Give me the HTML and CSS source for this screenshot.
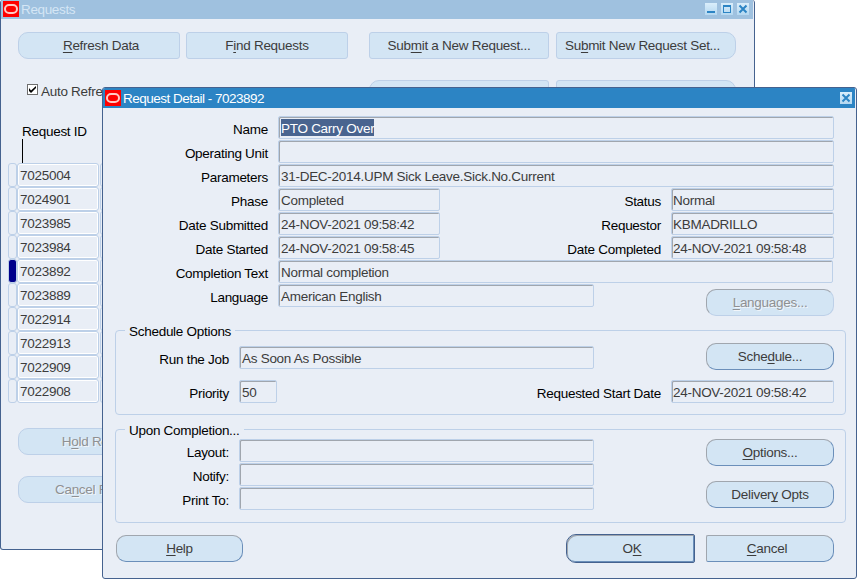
FILE: index.html
```html
<!DOCTYPE html>
<html lang="en">
<head>
  <meta charset="UTF-8">
  <title>Requests</title>
  <meta name="viewport" content="width=device-width, initial-scale=1.0">
  <link rel="stylesheet" href="styles.css">
</head>
<body>
  <div class="window requests">
    <div class="titlebar">
      <svg class="logo" width="16" height="16" viewBox="0 0 16 16"><rect width="16" height="16" fill="#fe0000"/><rect x="2" y="4" width="12" height="8" rx="4" fill="none" stroke="#ffc9c4" stroke-width="2"/></svg>
      <span class="title">Requests</span>
      <div class="controls">
        <svg width="12" height="12" viewBox="0 0 12 12"><path d="M2 8h8v2H2z" fill="#2c84c4"/></svg>
        <svg width="12" height="12" viewBox="0 0 12 12"><path d="M2 2h8v8H2zM3 4v5h6V4z" fill="#2c84c4" fill-rule="evenodd"/></svg>
        <svg width="12" height="12" viewBox="0 0 12 12"><path d="M2.5 2.5l7 7M9.5 2.5l-7 7" stroke="#2c84c4" stroke-width="2"/></svg>
      </div>
    </div>
    <div class="requests-body">
      <div class="toolbar">
        <button class="btn first"><u>R</u>efresh Data</button>
        <button class="btn">F<u>i</u>nd Requests</button>
        <button class="btn wide">Sub<u>m</u>it a New Request...</button>
        <button class="btn wide last">Su<u>b</u>mit New Request Set...</button>
      </div>
      <div class="options-row">
        <div class="check">
          <svg width="11" height="11" viewBox="0 0 11 11"><rect x=".5" y=".5" width="10" height="10" fill="#fff" stroke="#6e6e6e"/><path d="M2 4v3l2 2 5-5V2L4 6.500z" fill="#000"/></svg>
          <span>Auto Refresh (Y)</span>
        </div>
        <button class="btn wide first"></button>
        <button class="btn wide last"></button>
      </div>
      <div class="column-title">Request ID</div>
      <div class="caret"></div>
      <div class="records">
        <div class="record"><i></i><span>7025004</span><b></b></div>
        <div class="record"><i></i><span>7024901</span><b></b></div>
        <div class="record"><i></i><span>7023985</span><b></b></div>
        <div class="record"><i></i><span>7023984</span><b></b></div>
        <div class="record current"><i></i><span>7023892</span><b></b></div>
        <div class="record"><i></i><span>7023889</span><b></b></div>
        <div class="record"><i></i><span>7022914</span><b></b></div>
        <div class="record"><i></i><span>7022913</span><b></b></div>
        <div class="record"><i></i><span>7022909</span><b></b></div>
        <div class="record"><i></i><span>7022908</span><b></b></div>
      </div>
      <div class="side-buttons">
        <button class="btn first" disabled>H<u>o</u>ld Request</button>
        <button class="btn first" disabled>Ca<u>n</u>cel Request</button>
      </div>
    </div>
  </div>

  <div class="window detail">
    <div class="titlebar">
      <svg class="logo" width="16" height="16" viewBox="0 0 16 16"><rect width="16" height="16" fill="#fe0000"/><rect x="2" y="4" width="12" height="8" rx="4" fill="none" stroke="#ffc9c4" stroke-width="2"/></svg>
      <span class="title">Request Detail - 7023892</span>
      <div class="controls">
        <svg width="12" height="12" viewBox="0 0 12 12"><path d="M2.5 2.5l7 7M9.5 2.5l-7 7" stroke="#2c84c4" stroke-width="2"/></svg>
      </div>
    </div>
    <div class="detail-body">
      <div class="row"><label>Name</label><div class="field full"><mark>PTO Carry Over</mark></div></div>
      <div class="row"><label>Operating Unit</label><div class="field full"></div></div>
      <div class="row"><label>Parameters</label><div class="field full">31-DEC-2014.UPM Sick Leave.Sick.No.Current</div></div>
      <div class="row"><label>Phase</label><div class="field short">Completed</div><label class="second">Status</label><div class="field date">Normal</div></div>
      <div class="row"><label>Date Submitted</label><div class="field short">24-NOV-2021 09:58:42</div><label class="second">Requestor</label><div class="field date">KBMADRILLO</div></div>
      <div class="row"><label>Date Started</label><div class="field short">24-NOV-2021 09:58:45</div><label class="second">Date Completed</label><div class="field date">24-NOV-2021 09:58:48</div></div>
      <div class="row"><label>Completion Text</label><div class="field completion">Normal completion</div></div>
      <div class="row language"><label>Language</label><div class="field medium">American English</div><button class="btn" disabled><u>L</u>anguages...</button></div>

      <fieldset class="schedule">
        <legend>Schedule Options</legend>
        <div class="row run"><label>Run the Job</label><div class="field job">As Soon As Possible</div><button class="btn">Sche<u>d</u>ule...</button></div>
        <div class="row"><label>Priority</label><div class="field priority">50</div><label class="start">Requested Start Date</label><div class="field date">24-NOV-2021 09:58:42</div></div>
      </fieldset>

      <fieldset class="completion-group">
        <legend>Upon Completion...</legend>
        <div class="columns">
          <div class="lines">
            <div class="row"><label>Layout:</label><div class="field job"></div></div>
            <div class="row"><label>Notify:</label><div class="field job"></div></div>
            <div class="row"><label>Print To:</label><div class="field job"></div></div>
          </div>
          <div class="stack">
            <button class="btn"><u>O</u>ptions...</button>
            <button class="btn">Deliver<u>y</u> Opts</button>
          </div>
        </div>
      </fieldset>

      <div class="footer">
        <button class="btn help"><u>H</u>elp</button>
        <button class="btn ok">O<u>K</u></button>
        <button class="btn cancel"><u>C</u>ancel</button>
      </div>
    </div>
  </div>
</body>
</html>
```

FILE: styles.css
```css
:root {
  --window-bg: #e9eef6;
  --window-border: #45628f;
  --title-active: #2c84c4;
  --title-inactive: #9fc1df;
  --line: #bdd0e8;
  --shade: #a0a6ae;
  --btn-bg: #d3e5f4;
  --btn-edge: #6b8fba;
  --text: #3c3c3c;
}

* {
  box-sizing: border-box;
}

body {
  margin: 0;
  height: 584px;
  overflow: hidden;
  background: #fff;
  font-family: "Liberation Sans", Arial, sans-serif;
  font-size: 13.5px;
  letter-spacing: -0.28px;
  line-height: 15px;
  color: var(--text);
}

.window {
  position: absolute;
  background: var(--window-bg);
  border: 1px solid var(--window-border);
  border-radius: 3px;
  white-space: nowrap;
  overflow: hidden;
}

.requests {
  left: 0;
  top: 0;
  width: 755px;
  height: 550px;
  border-top: none;
}

.detail {
  left: 102px;
  top: 87px;
  width: 755px;
  height: 492px;
}

.titlebar {
  display: flex;
  align-items: center;
  height: 20px;
  margin-right: 1px;
  padding: 0 3px 0 2px;
  background: var(--title-active);
  color: #fff;
  letter-spacing: -0.5px;
}

.requests .titlebar {
  height: 19px;
  padding-bottom: 1px;
  background: var(--title-inactive);
  color: #d5e6f5;
  letter-spacing: -0.35px;
}

.title {
  margin-left: 2px;
}

.controls {
  display: flex;
  gap: 4px;
  margin-left: auto;
}

.controls svg {
  background: linear-gradient(#daeefb, #b4d7f0);
}

.requests .controls {
  margin-right: 1px;
}

.btn {
  width: 128px;
  height: 27px;
  padding: 0;
  font: inherit;
  letter-spacing: inherit;
  color: var(--text);
  background: var(--btn-bg);
  border: 1px solid;
  border-color: var(--shade) var(--btn-edge) var(--btn-edge) var(--shade);
  border-radius: 10px;
}

.btn u {
  text-underline-offset: 2px;
  text-decoration-thickness: 1px;
  text-decoration-skip-ink: none;
}

.btn:disabled {
  color: #8f9092;
  text-shadow: 1px 1px #f2f6fa;
  border-color: var(--shade) var(--line) var(--line) var(--shade);
}

/* Requests window */

.requests-body {
  padding: 13px 17px 0;
}

.requests .btn {
  width: 162px;
  border-color: var(--line);
  border-radius: 3px;
}

.requests .btn.wide {
  width: 180px;
}

.requests .btn.first {
  padding-left: 4px;
  border-radius: 10px 3px 3px 10px;
}

.requests .btn.last {
  padding-right: 7px;
  border-radius: 3px 10px 10px 3px;
}

.toolbar {
  display: flex;
}

.toolbar .btn:nth-child(2) {
  margin: 0 21px 0 6px;
}

.toolbar .last,
.options-row .last {
  margin-left: 7px;
}

.options-row {
  display: flex;
  margin-top: 21px;
}

.check {
  display: flex;
  gap: 3px;
  width: 351px;
  padding: 4px 0 0 9px;
}

.column-title {
  margin: 17px 0 0 4px;
  color: #000;
}

.caret {
  width: 1px;
  height: 24px;
  margin-left: 4px;
  background: #000;
}

.records {
  margin-left: -10px;
}

.record {
  display: flex;
  height: 24px;
}

.record i,
.record span,
.record b {
  border: 1px solid var(--line);
  border-radius: 3px;
}

.record i {
  width: 9px;
}

.record span {
  width: 82px;
  margin-right: 1px;
  padding: 4px 0 0 2px;
  box-shadow: inset 0 0 0 1px #fff;
}

.record b {
  width: 20px;
}

.record.current i {
  background: #00008b;
}

.side-buttons {
  display: flex;
  flex-direction: column;
  gap: 21px;
  margin-top: 25px;
}

/* Request Detail window */

.detail-body {
  padding: 8px 10px 0 12px;
}

.row {
  display: flex;
  height: 24px;
}

label {
  width: 153px;
  margin-right: 10px;
  padding-top: 6px;
  text-align: right;
  color: #000;
}

.field {
  height: 23px;
  padding: 4px 0 0 2px;
  border: 1px solid var(--line);
  border-radius: 2px;
  box-shadow: inset 1px 1px var(--shade);
}

.field.full {
  width: 556px;
}

.field.completion {
  width: 555px;
}

.field.short {
  width: 162px;
}

.field.date {
  width: 163px;
  padding-left: 1px;
}

.field.medium {
  width: 316px;
}

.field.job {
  width: 355px;
}

.field.priority {
  width: 38px;
}

mark {
  display: inline-block;
  height: 17px;
  margin-top: -2px;
  padding-top: 2px;
  background: #49648f;
  color: #fff;
}

label.second {
  width: 221px;
}

label.start {
  width: 384px;
}

.language .btn {
  margin: 5px 0 0 112px;
}

fieldset {
  min-width: 0;
  margin: 0;
  padding: 0;
  border: 1px solid var(--line);
  border-radius: 4px;
}

legend {
  height: 17px;
  margin-left: 9px;
  padding: 2px 4px 0;
  color: #000;
}

fieldset label {
  width: 113px;
}

.schedule {
  height: 93px;
  margin-top: 14px;
}

.run {
  height: 37px;
  margin-top: 4px;
}

.run .field,
.run label {
  margin-top: 3px;
}

.run .btn {
  margin-left: 112px;
}

.completion-group {
  height: 102px;
  margin-top: 6px;
}

.columns {
  display: flex;
  gap: 112px;
  padding-top: 1px;
}

.stack {
  display: flex;
  flex-direction: column;
  gap: 15px;
}

.footer {
  display: flex;
  align-items: center;
  margin: 11px 0 0 1px;
}

.help {
  width: 127px;
}

.ok {
  width: 129px;
  height: 29px;
  margin: 0 11px 0 323px;
  padding-left: 3px;
  border-color: var(--window-border);
  border-radius: 10px 2px 2px 10px;
  box-shadow: inset 1px 1px var(--shade), inset -1px -1px var(--btn-edge);
}

.cancel {
  padding-right: 6px;
  border-radius: 2px 10px 10px 2px;
}
```
